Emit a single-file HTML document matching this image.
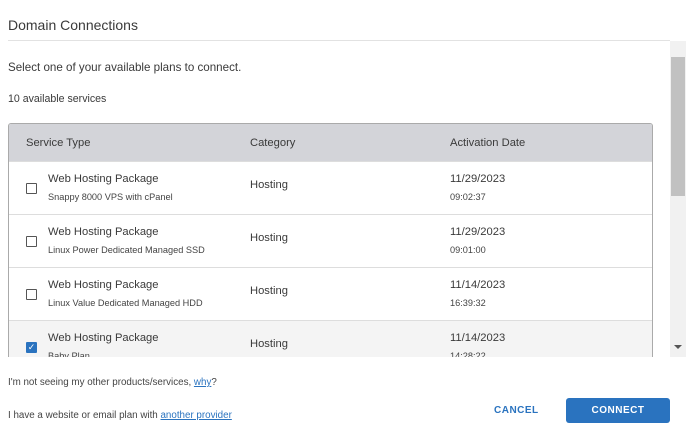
<!DOCTYPE html>
<html><head><style>
*{margin:0;padding:0;box-sizing:border-box}
body{width:686px;height:430px;background:#fff;font-family:"Liberation Sans",sans-serif;color:#3a3a3a;position:relative;overflow:hidden}
.abs{position:absolute}
.s{font-size:11.2px}
.xs{font-size:9.2px;color:#444}
.cb{position:absolute;left:17px;width:11px;height:11px;border:1px solid #555;border-radius:1px;background:#fff}
.row{position:absolute;left:0;width:643px;height:53px;border-top:1px solid #ddd}
</style></head><body>
<div class="abs" style="left:8px;top:17px;font-size:14px">Domain Connections</div>
<div class="abs" style="left:8px;top:40px;width:662px;height:1px;background:#e2e2e2"></div>
<div class="abs" style="left:0;top:41px;width:670px;height:316px;overflow:hidden">
  <div class="abs" style="left:8px;top:20px;font-size:11.6px">Select one of your available plans to connect.</div>
  <div class="abs" style="left:8px;top:52px;font-size:10.6px">10 available services</div>
  <div class="abs" style="left:8px;top:82px;width:645px;height:260px;border:1px solid #aaa;border-radius:3px;overflow:hidden">
    <div class="abs" style="left:0;top:0;width:645px;height:37px;background:#d3d4d9"></div>
    <div class="abs s" style="left:17px;top:13px">Service Type</div>
    <div class="abs s" style="left:241px;top:13px">Category</div>
    <div class="abs s" style="left:441px;top:13px">Activation Date</div>
    <div class="row" style="top:37px">
      <div class="cb" style="top:21px"></div>
      <div class="abs s" style="left:39px;top:11px">Web Hosting Package</div>
      <div class="abs xs" style="left:39px;top:30px">Snappy 8000 VPS with cPanel</div>
      <div class="abs s" style="left:241px;top:17px">Hosting</div>
      <div class="abs s" style="left:441px;top:11px">11/29/2023</div>
      <div class="abs xs" style="left:441px;top:30px">09:02:37</div>
    </div>
    <div class="row" style="top:90px">
      <div class="cb" style="top:21px"></div>
      <div class="abs s" style="left:39px;top:11px">Web Hosting Package</div>
      <div class="abs xs" style="left:39px;top:30px">Linux Power Dedicated Managed SSD</div>
      <div class="abs s" style="left:241px;top:17px">Hosting</div>
      <div class="abs s" style="left:441px;top:11px">11/29/2023</div>
      <div class="abs xs" style="left:441px;top:30px">09:01:00</div>
    </div>
    <div class="row" style="top:143px">
      <div class="cb" style="top:21px"></div>
      <div class="abs s" style="left:39px;top:11px">Web Hosting Package</div>
      <div class="abs xs" style="left:39px;top:30px">Linux Value Dedicated Managed HDD</div>
      <div class="abs s" style="left:241px;top:17px">Hosting</div>
      <div class="abs s" style="left:441px;top:11px">11/14/2023</div>
      <div class="abs xs" style="left:441px;top:30px">16:39:32</div>
    </div>
    <div class="row" style="top:196px;background:#f4f4f4">
      <div class="cb" style="top:21px;background:#2a73bf;border-color:#2a73bf;color:#fff;font-size:9px;line-height:9px;text-align:center">✓</div>
      <div class="abs s" style="left:39px;top:11px">Web Hosting Package</div>
      <div class="abs xs" style="left:39px;top:30px">Baby Plan</div>
      <div class="abs s" style="left:241px;top:17px">Hosting</div>
      <div class="abs s" style="left:441px;top:11px">11/14/2023</div>
      <div class="abs xs" style="left:441px;top:30px">14:28:22</div>
    </div>
  </div>
</div>
<div class="abs" style="left:670px;top:41px;width:16px;height:316px;background:#f1f1f1"></div>
<div class="abs" style="left:671px;top:57px;width:14px;height:139px;background:#c1c1c1"></div>
<div class="abs" style="left:674px;top:345px;width:0;height:0;border-left:4px solid transparent;border-right:4px solid transparent;border-top:4px solid #555"></div>
<div class="abs" style="left:8px;top:377px;font-size:9.8px;color:#444">I'm not seeing my other products/services, <span style="color:#2a73bf;text-decoration:underline">why</span>?</div>
<div class="abs" style="left:8px;top:410px;font-size:9.8px;color:#444">I have a website or email plan with <span style="color:#2a73bf;text-decoration:underline">another provider</span></div>
<div class="abs" style="left:494px;top:405px;font-size:10px;font-weight:bold;color:#2a73bf;letter-spacing:.5px">CANCEL</div>
<div class="abs" style="left:566px;top:398px;width:104px;height:25px;background:#2a73bf;border-radius:3px;color:#fff;font-size:10px;font-weight:bold;text-align:center;line-height:25px;letter-spacing:.5px">CONNECT</div>
</body></html>
